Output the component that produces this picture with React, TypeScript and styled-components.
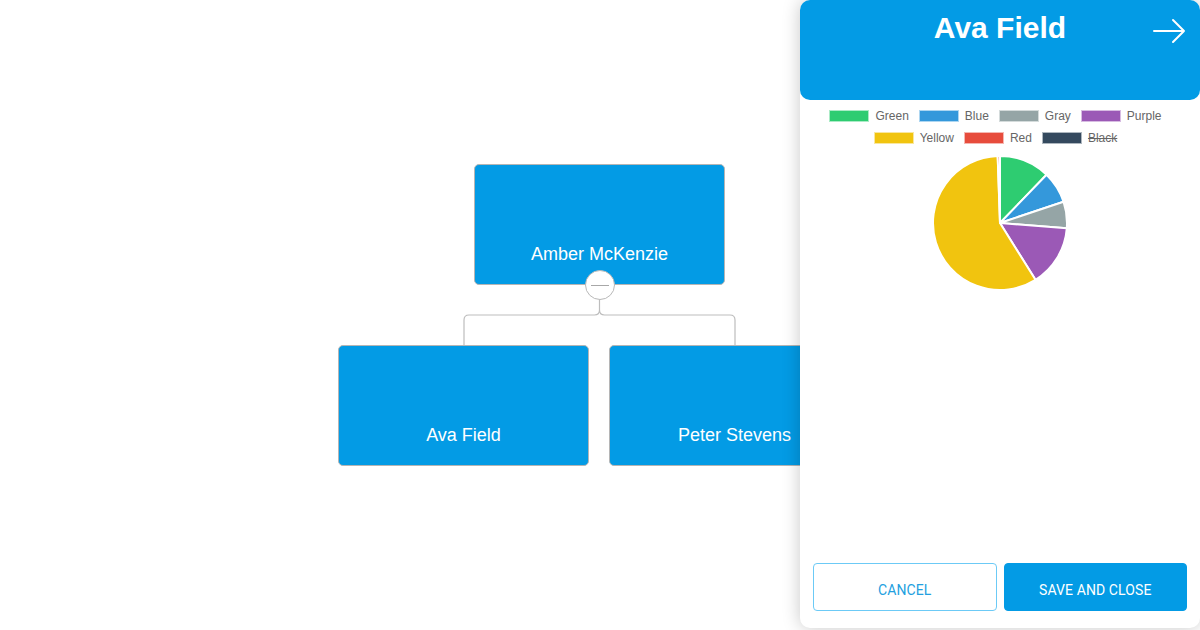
import React from "react";
import styled, { createGlobalStyle } from "styled-components";

const GlobalStyle = createGlobalStyle`
  html, body { margin: 0; padding: 0; background: #ffffff; }
  body { font-family: "Liberation Sans", Arial, sans-serif; }
  #root { width: 1200px; height: 630px; }
`;

const Page = styled.div`
  position: relative;
  width: 1200px;
  height: 630px;
  overflow: hidden;
  background: #ffffff;
`;

const Canvas = styled.div`
  position: absolute;
  inset: 0;
`;

const Links = styled.svg`
  position: absolute;
  left: 0;
  top: 0;
  overflow: visible;
`;

const Node = styled.div<{ $x: number; $y: number }>`
  position: absolute;
  left: ${(p) => p.$x}px;
  top: ${(p) => p.$y}px;
  width: 251px;
  height: 121px;
  box-sizing: border-box;
  background: #039be5;
  border: 1px solid #b5b5b5;
  border-radius: 5px;
  display: flex;
  align-items: flex-end;
  justify-content: center;
  padding-bottom: 20px;
  color: #ffffff;
  font-family: "Liberation Sans", Arial, sans-serif;
  font-size: 18px;
  line-height: 20px;
`;

const Toggle = styled.div<{ $x: number; $y: number }>`
  position: absolute;
  left: ${(p) => p.$x - 15}px;
  top: ${(p) => p.$y - 15}px;
  width: 30px;
  height: 30px;
  box-sizing: border-box;
  border-radius: 50%;
  background: #ffffff;
  border: 1px solid #b8b8b8;
  display: flex;
  align-items: center;
  justify-content: center;
  &::after {
    content: "";
    width: 18px;
    height: 1px;
    background: #a8a8a8;
  }
`;

const Panel = styled.aside`
  position: absolute;
  right: 0;
  top: 0;
  width: 400px;
  height: 628px;
  background: #ffffff;
  border-radius: 10px;
  box-shadow: 0 0 18px rgba(0, 0, 0, 0.22);
  display: flex;
  flex-direction: column;
`;

const Header = styled.header`
  position: relative;
  height: 100px;
  flex: none;
  background: #039be5;
  border-radius: 10px;
  display: flex;
  justify-content: center;
`;

const Title = styled.h1`
  margin: 11px 0 0;
  font-family: "Liberation Sans", Arial, sans-serif;
  font-weight: 700;
  font-size: 30px;
  line-height: 34px;
  color: #ffffff;
`;

const CloseButton = styled.button`
  position: absolute;
  right: 14px;
  top: 16px;
  width: 34px;
  height: 30px;
  padding: 0;
  border: none;
  background: transparent;
  cursor: pointer;
  display: flex;
  align-items: center;
  justify-content: center;
`;

const Body = styled.div`
  flex: 1;
  display: flex;
  flex-direction: column;
  align-items: center;
  padding: 5px 9px 0 0;
`;

const LegendRow = styled.div`
  display: flex;
  justify-content: center;
  height: 22px;
  align-items: center;
`;

const LegendItem = styled.div<{ $hidden?: boolean }>`
  display: flex;
  align-items: center;
  margin: 0 5px;
  font-family: "Liberation Sans", Arial, sans-serif;
  font-size: 12px;
  color: #666666;
  text-decoration: ${(p) => (p.$hidden ? "line-through" : "none")};
`;

const Swatch = styled.span<{ $color: string }>`
  width: 40px;
  height: 12px;
  box-sizing: border-box;
  background: ${(p) => p.$color};
  border: 1px solid rgba(255, 255, 255, 0.6);
  margin-right: 6px;
`;

const Pie = styled.svg`
  margin-top: 4px;
  margin-left: 9px;
`;

const Footer = styled.footer`
  display: flex;
  gap: 7px;
  padding: 0 13px 17px;
`;

const Button = styled.button<{ $primary?: boolean }>`
  flex: 1;
  height: 48px;
  box-sizing: border-box;
  padding: 5px 0 0;
  border-radius: 4px;
  font-family: Roboto, "Liberation Sans", Arial, sans-serif;
  font-size: 14px;
  letter-spacing: 0.1px;
  text-transform: uppercase;
  cursor: pointer;
  border: 1px solid ${(p) => (p.$primary ? "#039be5" : "#6ccaf6")};
  background: ${(p) => (p.$primary ? "#039be5" : "#ffffff")};
  color: ${(p) => (p.$primary ? "#ffffff" : "#239fe0")};
`;

const legend = [
  [
    { label: "Green", color: "#2ecc71" },
    { label: "Blue", color: "#3498db" },
    { label: "Gray", color: "#95a5a6" },
    { label: "Purple", color: "#9b59b6" },
  ],
  [
    { label: "Yellow", color: "#f1c40f" },
    { label: "Red", color: "#e74c3c" },
    { label: "Black", color: "#34495e", hidden: true },
  ],
];

const slices = [
  { color: "#2ecc71", deg: 44 },
  { color: "#3498db", deg: 27.5 },
  { color: "#95a5a6", deg: 23 },
  { color: "#9b59b6", deg: 53.5 },
  { color: "#f1c40f", deg: 210 },
  { color: "#e74c3c", deg: 2 },
];

function arcPath(cx: number, cy: number, r: number, a0: number, a1: number) {
  const rad = (d: number) => ((d - 90) * Math.PI) / 180;
  const x0 = cx + r * Math.cos(rad(a0));
  const y0 = cy + r * Math.sin(rad(a0));
  const x1 = cx + r * Math.cos(rad(a1));
  const y1 = cy + r * Math.sin(rad(a1));
  const large = a1 - a0 > 180 ? 1 : 0;
  return `M${cx},${cy} L${x0.toFixed(2)},${y0.toFixed(2)} A${r},${r} 0 ${large} 1 ${x1.toFixed(2)},${y1.toFixed(2)} Z`;
}

function PieChart() {
  let acc = 0;
  return (
    <Pie width="140" height="140" viewBox="0 0 140 140">
      {slices.map((s, i) => {
        const a0 = acc;
        acc += s.deg;
        return (
          <path
            key={i}
            d={arcPath(70, 70, 67, a0, acc)}
            fill={s.color}
            stroke="#ffffff"
            strokeWidth="2"
            strokeLinejoin="round"
          />
        );
      })}
    </Pie>
  );
}

export default function App() {
  return (
    <>
      <GlobalStyle />
      <Page>
        <Canvas>
          <Links width="1200" height="630">
            <path
              d="M599.5,300 V310 Q599.5,315 594.5,315 H469 Q464,315 464,320 V345 M599.5,310 Q599.5,315 604.5,315 H730 Q735,315 735,320 V345"
              fill="none"
              stroke="#bdbdbd"
              strokeWidth="1.2"
            />
          </Links>
          <Node $x={474} $y={164}>Amber McKenzie</Node>
          <Toggle $x={599.5} $y={285} />
          <Node $x={338} $y={345}>Ava Field</Node>
          <Node $x={609} $y={345}>Peter Stevens</Node>
        </Canvas>
        <Panel>
          <Header>
            <Title>Ava Field</Title>
            <CloseButton aria-label="Close">
              <svg width="34" height="26" viewBox="0 0 34 26" fill="none">
                <path
                  d="M2 13 H32 M21 2 L32 13 L21 24"
                  stroke="#ffffff"
                  strokeWidth="2"
                  strokeLinecap="round"
                  strokeLinejoin="round"
                />
              </svg>
            </CloseButton>
          </Header>
          <Body>
            {legend.map((row, ri) => (
              <LegendRow key={ri}>
                {row.map((it) => (
                  <LegendItem key={it.label} $hidden={"hidden" in it && !!it.hidden}>
                    <Swatch $color={it.color} />
                    {it.label}
                  </LegendItem>
                ))}
              </LegendRow>
            ))}
            <PieChart />
          </Body>
          <Footer>
            <Button>Cancel</Button>
            <Button $primary>Save and close</Button>
          </Footer>
        </Panel>
      </Page>
    </>
  );
}
